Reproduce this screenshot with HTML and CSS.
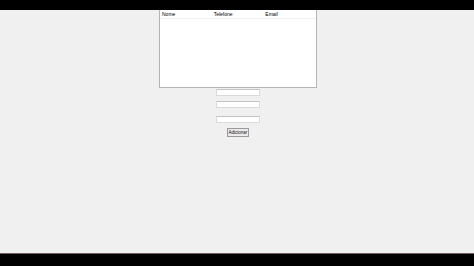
FILE: index.html
```html
<!DOCTYPE html>
<html>
<head>
<meta charset="utf-8">
<link rel="stylesheet" href="styles.css">
</head>
<body>
<div class="screen">
  <div class="bar-top"></div>
  <div class="app">
    <div class="table">
      <div class="thead">
        <span class="col">Nome</span>
        <span class="col">Telefone</span>
        <span class="col">Email</span>
      </div>
    </div>
    <div class="form">
      <input class="field f1" type="text">
      <input class="field f2" type="text">
      <input class="field f3" type="text">
      <button class="btn">Adicionar</button>
    </div>
  </div>
  <div class="bar-bottom"></div>
</div>
</body>
</html>
```
FILE: styles.css
```css
html, body {
  margin: 0;
  padding: 0;
  width: 474px;
  height: 266px;
  overflow: hidden;
  background: #000;
  font-family: "Liberation Sans", Arial, sans-serif;
}
.screen {
  display: flex;
  flex-direction: column;
  height: 266px;
}
.bar-top {
  height: 10px;
  background: #000;
  flex: none;
}
.app {
  flex: 1;
  background: #f0f0f0;
  display: flex;
  flex-direction: column;
  align-items: center;
  padding-left: 2px;
  border-bottom: 1px solid #6e5a5e;
}
.table {
  width: 156px;
  height: 77px;
  background: #fff;
  border: 1px solid #b4b4b4;
  border-top: none;
  box-sizing: content-box;
}
.thead {
  display: flex;
  height: 8px;
  padding-left: 1px;
  background: #fff;
  border-bottom: 1px solid #f2f2f2;
}
.col {
  width: 52px;
  font-size: 5px;
  line-height: 9px;
  color: #000;
  padding-left: 1px;
}
.form {
  display: flex;
  flex-direction: column;
  align-items: center;
  margin-top: 1px;
}
.field {
  width: 44px;
  height: 7px;
  box-sizing: border-box;
  margin: 0;
  padding: 0;
  background: #fff;
  border: 1px solid #dadada;
  border-top-color: #c4c4c4;
  outline: none;
}
.f2 { margin-top: 5px; }
.f3 { margin-top: 8px; }
.btn {
  margin-top: 5px;
  width: 22px;
  height: 9px;
  padding: 0;
  box-sizing: border-box;
  font-family: "Liberation Sans", Arial, sans-serif;
  font-size: 4.5px;
  line-height: 7px;
  color: #111;
  background: #ececec;
  border: 1px solid #9a9a9a;
  border-radius: 0;
}
.bar-bottom {
  height: 12px;
  background: #000;
  flex: none;
}
```
